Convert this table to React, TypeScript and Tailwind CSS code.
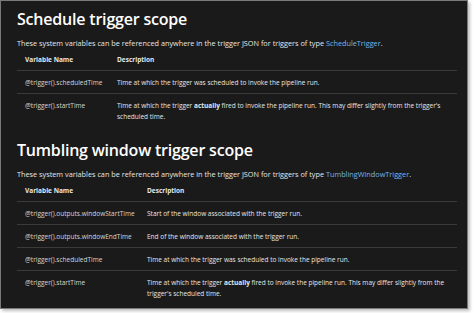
import React from "react";

const font = { fontFamily: '"Open Sans", "Noto Sans", Arial, sans-serif' };

type Row = { name: string; desc: React.ReactNode };

function Table({ rows, col1 }: { rows: Row[]; col1: string }) {
  return (
    <div className="mr-[10px] flex flex-col text-[6.5px] leading-[11px]">
      <div className="flex h-[22px] items-center border-b border-[#3a3a3a] font-bold text-[#e6e6e6]">
        <div className={`${col1} shrink-0 pl-[8px]`}>Variable Name</div>
        <div className="flex-1">Description</div>
      </div>
      {rows.map((r, i) => (
        <div
          key={i}
          className={`flex py-[5.5px] ${i < rows.length - 1 ? "border-b border-[#3a3a3a]" : ""}`}
        >
          <div className={`${col1} shrink-0 pl-[8px] text-[#d6d6d6]`}>{r.name}</div>
          <div className="flex-1 pr-[8px] text-[#e6e6e6]">{r.desc}</div>
        </div>
      ))}
    </div>
  );
}

const startDesc = (
  <>
    Time at which the trigger <b>actually</b> fired to invoke the pipeline run. This may differ slightly from the trigger's scheduled time.
  </>
);

export default function App() {
  return (
    <div className="h-[313px] w-[474px] bg-white" style={font}>
      <div className="h-[309px] w-[468px] border border-[#7a7a7a] bg-[#1a1a1a] shadow-[2px_2px_3px_rgba(0,0,0,0.25)]">
        <div className="flex flex-col pl-[16px]">
          <h2 className="mt-[6px] text-[16px] leading-[24px] font-semibold tracking-[-0.2px] text-white">Schedule trigger scope</h2>
          <p className="mt-[7px] text-[7.3px] leading-[11px] text-[#e6e6e6]">
            These system variables can be referenced anywhere in the trigger JSON for triggers of type{" "}
            <span className="text-[#75b6e7]">ScheduleTrigger</span>.
          </p>
          <Table
            col1="w-[100px]"
            rows={[
              { name: "@trigger().scheduledTime", desc: "Time at which the trigger was scheduled to invoke the pipeline run." },
              { name: "@trigger().startTime", desc: startDesc },
            ]}
          />
          <h2 className="mt-[11px] text-[16px] leading-[24px] font-semibold tracking-[-0.2px] text-white">Tumbling window trigger scope</h2>
          <p className="mt-[7px] text-[7.3px] leading-[11px] text-[#e6e6e6]">
            These system variables can be referenced anywhere in the trigger JSON for triggers of type{" "}
            <span className="text-[#75b6e7]">TumblingWindowTrigger</span>.
          </p>
          <Table
            col1="w-[130px]"
            rows={[
              { name: "@trigger().outputs.windowStartTime", desc: "Start of the window associated with the trigger run." },
              { name: "@trigger().outputs.windowEndTime", desc: "End of the window associated with the trigger run." },
              { name: "@trigger().scheduledTime", desc: "Time at which the trigger was scheduled to invoke the pipeline run." },
              { name: "@trigger().startTime", desc: startDesc },
            ]}
          />
        </div>
      </div>
    </div>
  );
}
